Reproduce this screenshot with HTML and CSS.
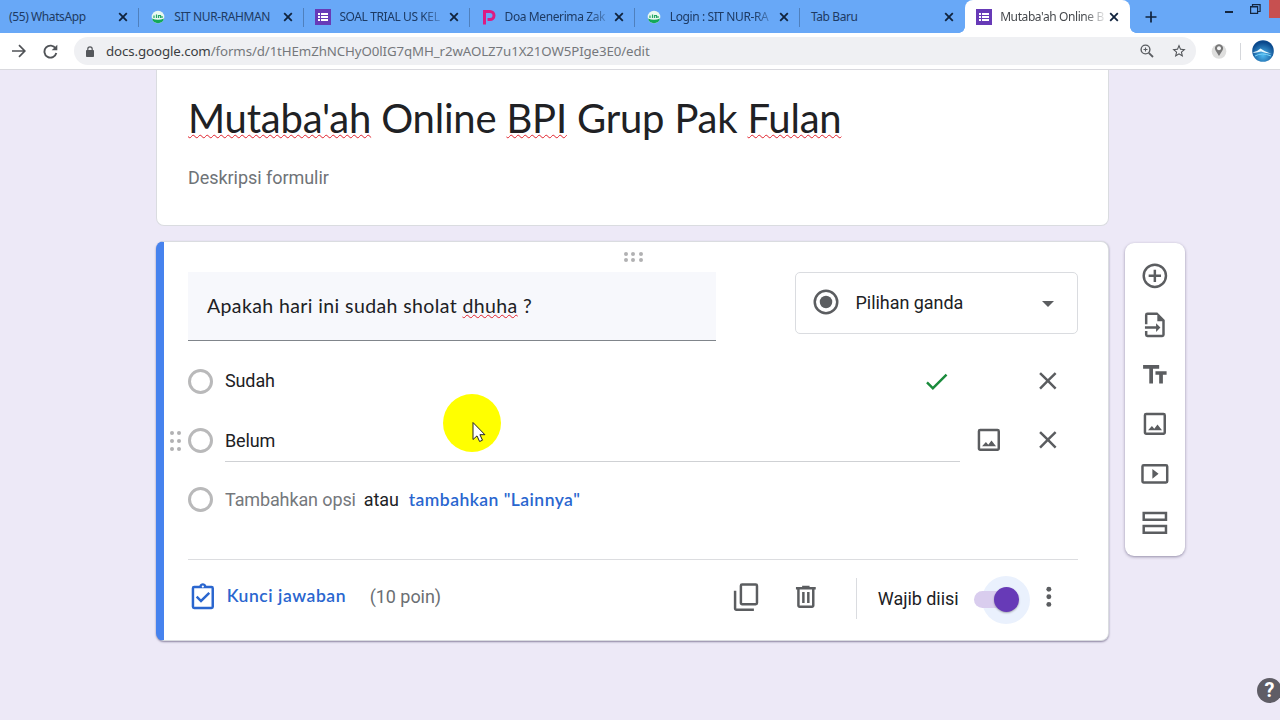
FILE: index.html
```html
<!DOCTYPE html>
<html lang="id">
<head>
<meta charset="utf-8">
<title>Mutaba'ah Online BPI Grup Pak Fulan</title>
<link rel="stylesheet" href="styles.css">
</head>
<body>
<svg class="defs" width="0" height="0">
  <symbol id="x" viewBox="0 0 10 10"><path d="M1.2 1.2l7.6 7.6M8.8 1.2L1.2 8.8" fill="none" stroke="currentColor" stroke-width="1.8"/></symbol>
  <symbol id="form" viewBox="0 0 16 16"><path fill="#673ab7" d="M0 0h16v16H0z"/><path fill="#fff" d="M3 4h2v2H3zM6 4h7v2H6zM3 7h2v2H3zM6 7h7v2H6zM3 10h2v2H3zM6 10h7v2H6z"/></symbol>
  <symbol id="school" viewBox="0 0 14 14"><circle cx="7" cy="7" r="6.3" fill="#e9f8f0"/><path d="M1 8.500a6.200 6.200 0 0 0 12 0q-6 2.500-12 0z" fill="#13a85a"/><path d="M3 8V5.500M5.500 8V4.500M7.500 8V5.500H9.500V8M11 8V6" stroke="#25a866" stroke-width="1.200" fill="none"/></symbol>
  <symbol id="close" viewBox="0 0 24 24"><path d="M19 6.410L17.590 5 12 10.590 6.410 5 5 6.410 10.590 12 5 17.590 6.410 19 12 13.410 17.590 19 19 17.590 13.410 12z"/></symbol>
  <symbol id="image" viewBox="0 0 24 24"><path d="M19 5v14H5V5h14m0-2H5a2 2 0 0 0-2 2v14c0 1.100.9 2 2 2h14c1.100 0 2-.9 2-2V5a2 2 0 0 0-2-2z"/><path d="M14.140 12.500l-2.600 3.400-1.900-2.100L6.500 17.200h11.300z"/></symbol>
</svg>

<header class="tabs">
  <div class="tab first"><span class="fav"><i class="wa"></i></span><span class="label">(55) WhatsApp</span><svg class="tx"><use href="#x"/></svg></div>
  <div class="tab"><span class="fav"><svg width="14" height="14"><use href="#school"/></svg></span><span class="label">SIT NUR-RAHMAN</span><svg class="tx"><use href="#x"/></svg></div>
  <div class="tab"><span class="fav"><svg width="16" height="16"><use href="#form"/></svg></span><span class="label fade">SOAL TRIAL US KEL</span><svg class="tx"><use href="#x"/></svg></div>
  <div class="tab"><span class="fav"><svg width="14" height="16" viewBox="0 0 14 16"><path d="M2.500 15.500V2.500H8a4 4 0 0 1 0 8H5.500" fill="none" stroke="#dc1c83" stroke-width="3"/></svg></span><span class="label fade">Doa Menerima Zak</span><svg class="tx"><use href="#x"/></svg></div>
  <div class="tab"><span class="fav"><svg width="14" height="14"><use href="#school"/></svg></span><span class="label fade">Login : SIT NUR-RA</span><svg class="tx"><use href="#x"/></svg></div>
  <div class="tab plain"><span class="label">Tab Baru</span><svg class="tx"><use href="#x"/></svg></div>
  <div class="tab active"><span class="fav"><svg width="16" height="16"><use href="#form"/></svg></span><span class="label fade">Mutaba'ah Online B</span><svg class="tx"><use href="#x"/></svg></div>
  <svg class="plus" width="12" height="12" viewBox="0 0 12 12"><path d="M6 .5v11M.5 6h11" stroke="#10233d" stroke-width="1.700"/></svg>
  <div class="win">
    <i class="min"></i>
    <svg width="11" height="10" viewBox="0 0 11 10"><path d="M.6 2.600h7v6.800h-7zM.6 3h7M2.500 2.500V.6h7.600v6.900H8" fill="none" stroke="#14263f" stroke-width="1.200"/></svg>
    <i class="quit"></i>
  </div>
</header>

<nav class="toolbar">
  <svg class="fwd" width="14" height="14" viewBox="0 0 14 14"><path d="M0 7h12.500M7 1.200L12.800 7 7 12.800" fill="none" stroke="#505357" stroke-width="1.700"/></svg>
  <svg class="reload" width="15" height="15" viewBox="0 0 15 15"><path d="M12.600 4.500A6 6 0 1 0 13.300 9" fill="none" stroke="#505357" stroke-width="1.900"/><path d="M14.300.7v5.600H8.700z" fill="#505357"/></svg>
  <div class="omni">
    <svg class="lock" width="8" height="11" viewBox="0 0 8 11"><rect y="4" width="8" height="7" rx=".8" fill="#55585c"/><path d="M1.800 4.500V3a2.200 2.200 0 0 1 4.400 0v1.500" fill="none" stroke="#55585c" stroke-width="1.200"/></svg>
    <span class="url"><b>docs.google.com</b>/forms/d/1tHEmZhNCHyO0lIG7qMH_r2wAOLZ7u1X21OW5PIge3E0/edit</span>
    <svg class="mag" width="14" height="14" viewBox="0 0 14 14"><circle cx="5.500" cy="5.500" r="4.400" fill="none" stroke="#5a5d61" stroke-width="1.400"/><path d="M8.800 8.800l4.200 4.200" stroke="#5a5d61" stroke-width="1.800"/><path d="M5.500 3.500v4M3.500 5.500h4" stroke="#5a5d61" stroke-width="1.100"/></svg>
    <svg class="star" width="16" height="16" viewBox="0 0 24 24" fill="#505357"><path d="M22 9.240l-7.190-.62L12 2 9.190 8.630 2 9.240l5.460 4.730L5.820 21 12 17.270 18.180 21l-1.630-7.030zM12 15.400l-3.760 2.270 1-4.280-3.320-2.880 4.380-.38L12 6.100l1.710 4.040 4.380.38-3.320 2.880 1 4.280z"/></svg>
  </div>
  <svg class="ext" width="16" height="16" viewBox="0 0 16 16"><circle cx="8" cy="8.500" r="7.300" fill="#dededd"/><path d="M8 13L4.600 7.500a4 4 0 1 1 6.800 0z" fill="#777"/><circle cx="8" cy="5.200" r="2" fill="#f5f5f5"/></svg>
  <i class="sep"></i>
  <svg class="avatar" width="22" height="22" viewBox="0 0 22 22"><defs><radialGradient id="sea" cx=".5" cy=".7" r=".6"><stop offset="0" stop-color="#4eb9f1"/><stop offset="1" stop-color="#0a488c"/></radialGradient></defs><circle cx="11" cy="11" r="10.800" fill="url(#sea)"/><path d="M.4 12.500Q5 12 8.500 8.500 12 11 19.500 14 12 12.500 9 11.500 5 13 .4 12.500z" fill="#e9f9ff"/><path d="M3 16q7-4 16 0" stroke="#78d4fa" fill="none"/></svg>
</nav>

<main class="page">
  <div class="column">
    <section class="card title-card">
      <h1><u>Mutaba'ah</u> Online <u>BPI</u> Grup Pak <u>Fulan</u></h1>
      <p class="desc">Deskripsi formulir</p>
    </section>

    <section class="card question">
      <div class="grip"><i></i><i></i><i></i><i></i><i></i><i></i></div>
      <div class="ask">
        <div class="field"><span>Apakah hari ini sudah sholat <u>dhuha</u> ?</span></div>
        <div class="select">
          <svg width="30" height="30" viewBox="0 0 24 24"><circle cx="12" cy="12" r="9" fill="none" stroke="#5b5d60" stroke-width="2"/><circle cx="12" cy="12" r="5" fill="#5b5d60"/></svg>
          <span>Pilihan ganda</span>
          <i class="caret"></i>
        </div>
      </div>
      <div class="option">
        <i class="radio"></i><span class="text">Sudah</span>
        <svg class="ic check" viewBox="0 0 24 24"><path d="M9 16.170L4.830 12l-1.420 1.410L9 19 21 7l-1.410-1.410z"/></svg>
        <span></span>
        <svg class="ic"><use href="#close"/></svg>
      </div>
      <div class="option hover">
        <div class="grip side"><i></i><i></i><i></i><i></i><i></i><i></i></div>
        <i class="radio"></i><span class="text wide">Belum</span>
        <svg class="ic"><use href="#image"/></svg>
        <svg class="ic"><use href="#close"/></svg>
      </div>
      <div class="option add">
        <i class="radio"></i>
        <span class="text wide"><span class="muted">Tambahkan opsi</span><span class="or">atau</span><a class="other">tambahkan "Lainnya"</a></span>
      </div>
      <footer class="foot">
        <svg class="ic key" viewBox="0 0 24 24"><path d="M19 3h-4.180C14.400 1.840 13.300 1 12 1s-2.400.84-2.820 2H5a2 2 0 0 0-2 2v15a2 2 0 0 0 2 2h14a2 2 0 0 0 2-2V5a2 2 0 0 0-2-2zM12 2.800a.9.9 0 1 1 0 1.800.9.9 0 0 1 0-1.800zM19 20H5V5h14z"/><path d="M17.900 9.400L16.500 8l-6 6-2.800-2.800-1.400 1.400 4.200 4.200z"/></svg>
        <a class="keytext">Kunci jawaban</a>
        <span class="points">(10 poin)</span>
        <svg class="ic copy" viewBox="0 0 24 24"><path d="M20 1H9a2 2 0 0 0-2 2v14c0 1.100.9 2 2 2h11a2 2 0 0 0 2-2V3a2 2 0 0 0-2-2zm0 16H9V3h11zM4.300 7h-2v14.500c0 1.100.9 2 2 2H18.500v-2H4.300z"/></svg>
        <svg class="ic trash" viewBox="0 0 24 24"><path d="M15 4V3H9v1H4v2h1v13c0 1.100.9 2 2 2h10c1.100 0 2-.9 2-2V6h1V4h-5zm2 15H7V6h10v13zM9 8h2v9H9zm4 0h2v9h-2z"/></svg>
        <i class="rule"></i>
        <span class="req">Wajib diisi</span>
        <span class="toggle"><i class="halo"></i><i class="track"></i><i class="knob"></i></span>
        <svg class="ic more" viewBox="0 0 24 24"><circle cx="12" cy="5.900" r="2"/><circle cx="12" cy="12" r="2"/><circle cx="12" cy="18.100" r="2"/></svg>
      </footer>
    </section>
  </div>

  <aside class="side-tools">
    <svg class="ic" viewBox="0 0 24 24"><path d="M13 7h-2v4H7v2h4v4h2v-4h4v-2h-4zM12 2a10 10 0 1 0 0 20 10 10 0 0 0 0-20zm0 18a8 8 0 1 1 0-16 8 8 0 0 1 0 16z"/></svg>
    <svg class="ic" viewBox="0 0 24 24"><path d="M14 2H6a2 2 0 0 0-2 2v7.500h2V4h8v5h4v11H6v-3H4v3a2 2 0 0 0 2 2h12a2 2 0 0 0 2-2V8z"/><path d="M13 10.700v2.500H4v2h9v2.500l3.500-3.500z"/></svg>
    <svg class="ic" viewBox="0 0 24 24"><path d="M2.500 4v3h5v12h3V7h5V4h-13zm19 5h-9v3h3v7h3v-7h3V9z"/></svg>
    <svg class="ic"><use href="#image"/></svg>
    <svg class="ic" viewBox="0 0 24 24"><path d="M10 8v8l5-4zM21 4H3a2 2 0 0 0-2 2v12c0 1.100.9 2 2 2h18a2 2 0 0 0 2-2V6a2 2 0 0 0-2-2zm0 14H3V6h18z"/></svg>
    <svg class="ic" viewBox="0 0 24 24"><path d="M20 5v3.500H4V5h16m2-2H2v7.500h20zM20 15.500V19H4v-3.500h16m2-2H2V21h20z"/></svg>
  </aside>

  <svg class="pointer" width="60" height="60" viewBox="0 0 60 60"><circle cx="30" cy="30" r="29" fill="#ff0"/><path d="M31 29.500v17l4-3.600 2.600 5.600 2.900-1.300-2.600-5.500h5z" fill="#fff" stroke="#222" stroke-width="1"/></svg>
  <div class="help">?</div>
</main>
</body>
</html>
```
FILE: styles.css
```css
* { box-sizing: border-box; }
body {
  margin: 0;
  width: 1280px;
  height: 720px;
  overflow: hidden;
  background: #ede9f7;
  font-family: Roboto, sans-serif;
  color: #202124;
}
i { font-style: normal; display: block; }
svg { display: block; flex: none; }
.defs { position: absolute; }

/* browser chrome */
.tabs {
  display: flex;
  align-items: center;
  height: 33px;
  background: #68a8f7;
  font: 12px "Noto Sans", "Open Sans", sans-serif;
}
.tab {
  flex: none;
  display: flex;
  align-items: center;
  width: 165.200px;
  height: 33px;
  padding: 0 11px 0 11px;
  color: #1d3a63;
  background: linear-gradient(#4f80bd, #4f80bd) right 8px / 1px 19px no-repeat;
}
.tab.first { margin-left: -26px; }
.tab.plain { background: none; }
.tab.active {
  position: relative;
  background: #fff;
  border-radius: 8px 8px 0 0;
  color: #45484c;
}
.active::before, .active::after {
  content: "";
  position: absolute;
  bottom: 0;
  width: 6px;
  height: 6px;
}
.active::before { left: -6px; background: radial-gradient(circle at 0 0, transparent 5.500px, #fff 6px); }
.active::after { right: -6px; background: radial-gradient(circle at 100% 0, transparent 5.500px, #fff 6px); }
.fav { width: 16px; display: flex; justify-content: center; }
.wa { width: 14px; height: 14px; border-radius: 50%; background: #fff; }
.label {
  flex: 1;
  min-width: 0;
  margin-left: 8px;
  line-height: 18px;
  white-space: nowrap;
  letter-spacing: -.4px;
}
.plain .label { margin-left: 0; }
.fade { -webkit-mask-image: linear-gradient(90deg, #000 84px, rgba(0, 0, 0, .15) 104px); mask-image: linear-gradient(90deg, #000 84px, rgba(0, 0, 0, .15) 104px); }
.tx { width: 10px; height: 10px; margin-left: 5px; color: #10233d; }
.plus { margin-left: 15px; }
.win { display: flex; align-self: flex-start; margin-left: auto; }
.min { width: 8px; height: 2px; margin: 11px 17px 0 0; background: #14263f; }
.win svg { margin-top: 4px; }
.quit { width: 11px; height: 18px; margin-left: 8px; background: #c75050; }

.toolbar {
  display: flex;
  align-items: center;
  height: 37px;
  padding-left: 12px;
  background: #fff;
  border-bottom: 1px solid #d9d9de;
}
.reload { margin-left: 17px; }
.omni {
  display: flex;
  align-items: center;
  width: 1122px;
  height: 28px;
  margin-left: 16px;
  padding: 0 9px 0 12px;
  border-radius: 14px;
  background: #eff0f3;
}
.url {
  margin-left: 12px;
  font: 13.300px "Noto Sans", "Open Sans", sans-serif;
  letter-spacing: -.11px;
  white-space: nowrap;
  color: #75787c;
}
.url b { font-weight: 400; color: #3b3e42; }
.mag { margin-left: auto; }
.star { margin-left: 17px; }
.ext { margin-left: 15px; }
.sep { width: 1px; height: 17px; margin-left: 13px; background: #d5d7db; }
.avatar { margin-left: 11px; }

/* form */
.page { display: flex; align-items: flex-start; height: 650px; padding-left: 156px; overflow: hidden; position: relative; }
.column { width: 952.500px; }
.card { background: #fff; border: 1px solid #dadce0; border-radius: 8px; }
.title-card { height: 156px; border-top: 0; border-radius: 0 0 8px 8px; padding: 23px 30px 0 31px; }
h1 {
  margin: 0;
  font: 400 40px/50px Lato, sans-serif;
  letter-spacing: -.2px;
  white-space: nowrap;
}
u { text-decoration: underline wavy #e0212b 1px; text-decoration-skip-ink: none; text-underline-offset: 1px; }
.desc { margin: 22px 0 0; font-size: 18px; line-height: 26px; letter-spacing: -.05px; color: #6f7377; }

.question {
  height: 400px;
  margin-top: 15px;
  padding: 10px 30px 0 24px;
  border-left: 8px solid #4682ee;
  box-shadow: 0 1px 2px rgba(60, 50, 90, .55);
}
.grip { display: grid; grid-template-columns: repeat(3, 4px); gap: 2px 3.600px; width: 18px; margin: 0 auto; }
.grip i { width: 4px; height: 4px; border-radius: 50%; background: #b1b1b3; }
.ask { display: flex; justify-content: space-between; margin-top: 10px; }
.field {
  display: flex;
  align-items: center;
  width: 528px;
  height: 69px;
  padding: 0 0 2px 19px;
  background: #f7f8fc;
  border-bottom: 1px solid #80858b;
  font: 19.500px Lato, sans-serif;
  letter-spacing: .39px;
  white-space: nowrap;
}
.select {
  display: flex;
  align-items: center;
  width: 283px;
  height: 62px;
  padding: 0 23px 2px 15px;
  border: 1px solid #dadce0;
  border-radius: 5px;
  font-size: 18px;
  letter-spacing: -.05px;
}
.select span { margin-left: 15px; flex: 1; }
.caret { border: 6.500px solid transparent; border-top-color: #5b5d60; border-bottom: 0; margin-top: 3px; }

.option {
  position: relative;
  display: grid;
  grid-template-columns: 37px 1fr 46px 59px 59px;
  align-items: center;
  justify-items: center;
  height: 59.400px;
  font-size: 18px;
  letter-spacing: -.12px;
}
.ask + .option { margin-top: 10.500px; }
.radio { justify-self: start; width: 25px; height: 25px; border: 3px solid #b9b9ba; border-radius: 50%; }
.text { justify-self: stretch; line-height: 40px; white-space: nowrap; }
.wide { grid-column: 2 / 4; }
.hover .wide { border-bottom: 1px solid #cfd1d4; margin-top: 1px; }
.grip.side { position: absolute; left: -18px; top: 20px; grid-template-columns: repeat(2, 4px); gap: 4px 2.500px; width: 12px; }
.ic { width: 29.700px; height: 29.700px; fill: #5b5d60; }
.check { fill: #1a8b3c; width: 29px; height: 29px; }
.hover .ic { margin-bottom: 1px; }
.muted { color: #75787c; }
.or { margin-left: 8px; }
.other { margin-left: 10px; font: 600 17.500px Lato, sans-serif; letter-spacing: .46px; color: #2a66cf; }
.add .wide { grid-column: 2 / 6; }

.foot {
  display: flex;
  align-items: center;
  height: 75px;
  margin-top: 29px;
  border-top: 1px solid #dcdde0;
  font-size: 18px;
  letter-spacing: -.05px;
  white-space: nowrap;
}
.key { fill: #2a66cf; }
.keytext { width: 120px; margin: 0 0 2px 9px; font: 600 17.500px Lato, sans-serif; letter-spacing: .55px; color: #2a66cf; }
.points { margin-left: 23px; color: #6b6f73; }
.copy { margin-left: auto; }
.trash { margin-left: 30px; }
.rule { width: 1px; height: 41px; margin: 4px 0 0 35px; background: #dadce0; }
.req { width: 81px; margin: 4px 0 0 21px; }
.toggle { position: relative; width: 45px; height: 17px; margin: 6px 0 0 15px; }
.halo, .track, .knob { position: absolute; }
.halo { right: -11px; top: -15.500px; width: 48px; height: 48px; border-radius: 50%; background: #eaf1fd; }
.track { inset: 0; border-radius: 9px; background: #d9cdee; }
.knob {
  right: 0;
  top: -4px;
  width: 25px;
  height: 25px;
  border-radius: 50%;
  background: #673ab7;
  box-shadow: 0 1px 2px rgba(0, 0, 0, .3);
}
.more { margin: 1px 14px 0 15px; }

.side-tools {
  display: flex;
  flex-direction: column;
  align-items: center;
  gap: 19.800px;
  width: 60px;
  height: 313px;
  margin: 173px 0 0 16px;
  padding-top: 18px;
  border-radius: 9px;
  background: #fff;
  box-shadow: 0 1px 3px rgba(60, 50, 90, .5);
}

.pointer { position: absolute; left: 442px; top: 323px; }
.help {
  position: absolute;
  left: 1257px;
  top: 608px;
  width: 25px;
  height: 25px;
  border-radius: 50%;
  background: #5f5d66;
  color: #fff;
  font: 700 20px/25px Roboto, sans-serif;
  text-align: center;
}
```
